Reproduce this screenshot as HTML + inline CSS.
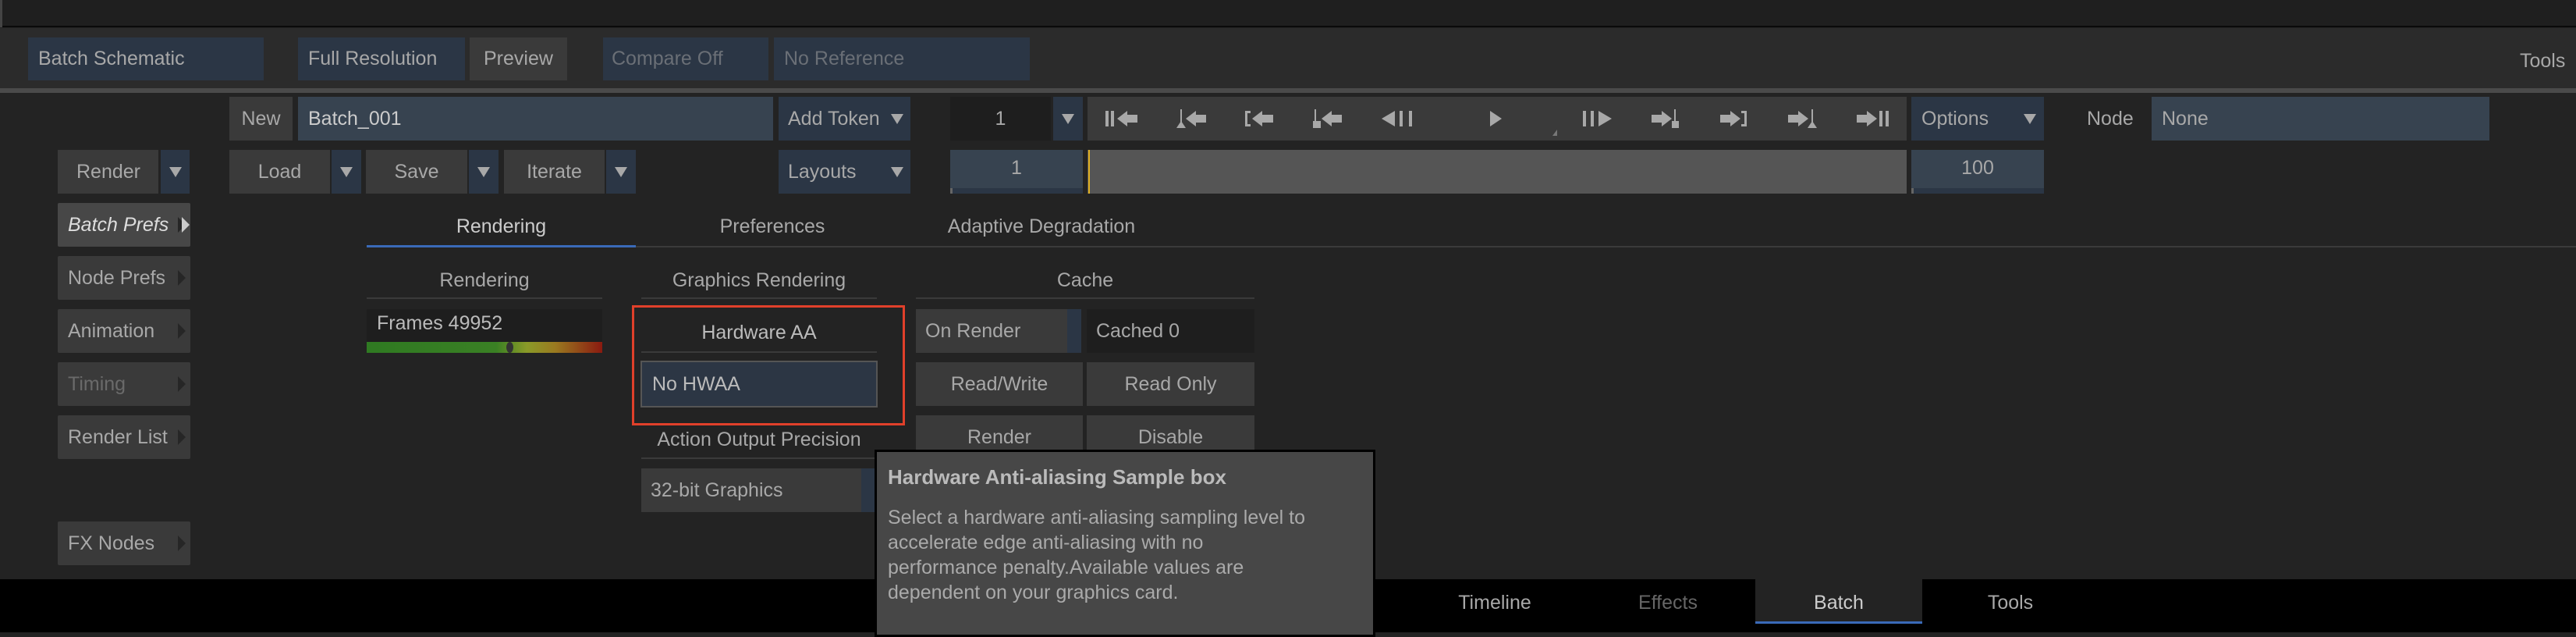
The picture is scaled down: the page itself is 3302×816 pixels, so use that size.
<!DOCTYPE html>
<html><head><meta charset="utf-8"><style>
*{margin:0;padding:0;box-sizing:border-box}
body{width:3302px;height:810px;background:#232323;position:relative;overflow:hidden;font-family:"Liberation Sans","DejaVu Sans",sans-serif;font-size:25px;color:#a8a8a8}
.a{position:absolute}
.b{position:absolute;display:flex;align-items:center;white-space:nowrap}
.blue{background:#2b3645}.fld{background:#374350}.gr{background:#3a3a3a}.dk{background:#1e1e1e}
.c{justify-content:center}
.dd{position:absolute;display:flex;align-items:center;justify-content:center;background:#2b3645}
.dd:after{content:"";border-left:8px solid transparent;border-right:8px solid transparent;border-top:13px solid #a8a8a8}
.side{position:absolute;left:74px;width:170px;height:56px;background:#3a3a3a;display:flex;align-items:center;padding-left:13px;border-radius:2px}
.side:after{content:"";position:absolute;right:6px;top:18px;border-top:10px solid transparent;border-bottom:10px solid transparent;border-left:10px solid #262626}
.hd{position:absolute;text-align:center;border-bottom:2px solid #3a3a3a;height:26px}
</style></head><body>
<div class="a" style="left:0;top:0;width:3302px;height:35px;background:#1f1f1f;border-bottom:2px solid #0a0a0a"></div>
<div class="a" style="left:0;top:0;width:3px;height:35px;background:#444"></div>
<div class="a" style="left:0;top:36px;width:3302px;height:77px;background:#2b2b2b"></div>
<div class="a" style="left:0;top:113px;width:3302px;height:6px;background:#4a4a4a"></div>

<div class="b blue" style="left:36px;top:48px;width:302px;height:55px;padding-left:13px">Batch Schematic</div>
<div class="b blue" style="left:382px;top:48px;width:214px;height:55px;padding-left:13px">Full Resolution</div>
<div class="b gr" style="left:602px;top:48px;width:125px;height:55px;padding-left:18px">Preview</div>
<div class="b blue" style="left:773px;top:48px;width:212px;height:55px;padding-left:11px;color:#6a6f76">Compare Off</div>
<div class="b blue" style="left:992px;top:48px;width:328px;height:55px;padding-left:13px;color:#6a6f76">No Reference</div>
<div class="b" style="left:3230px;top:60px;height:36px">Tools</div>

<div class="b gr c" style="left:294px;top:124px;width:81px;height:56px">New</div>
<div class="b fld" style="left:382px;top:124px;width:609px;height:56px;padding-left:13px;color:#ccc">Batch_001</div>
<div class="b blue" style="left:998px;top:124px;width:169px;height:56px;padding-left:12px">Add Token</div>
<div class="dd" style="left:1132px;top:124px;width:35px;height:56px;background:none"></div>
<div class="b dk c" style="left:1218px;top:124px;width:129px;height:56px">1</div>
<div class="dd" style="left:1350px;top:124px;width:38px;height:56px"></div>
<div class="a gr" style="left:1394px;top:124px;width:1050px;height:56px"></div>
<div class="b blue" style="left:2450px;top:124px;width:170px;height:56px;padding-left:13px">Options</div>
<div class="dd" style="left:2583px;top:124px;width:37px;height:56px;background:none"></div>
<div class="b" style="left:2675px;top:124px;height:56px">Node</div>
<div class="b fld" style="left:2758px;top:124px;width:433px;height:56px;padding-left:13px">None</div>

<div class="b gr" style="left:74px;top:192px;width:129px;height:56px;padding-left:24px">Render</div>
<div class="dd" style="left:206px;top:192px;width:37px;height:56px"></div>
<div class="b gr c" style="left:294px;top:192px;width:129px;height:56px">Load</div>
<div class="dd" style="left:425px;top:192px;width:38px;height:56px"></div>
<div class="b gr c" style="left:469px;top:192px;width:130px;height:56px">Save</div>
<div class="dd" style="left:601px;top:192px;width:38px;height:56px"></div>
<div class="b gr c" style="left:646px;top:192px;width:129px;height:56px">Iterate</div>
<div class="dd" style="left:777px;top:192px;width:38px;height:56px"></div>
<div class="b blue" style="left:998px;top:192px;width:169px;height:56px;padding-left:12px">Layouts</div>
<div class="dd" style="left:1132px;top:192px;width:35px;height:56px;background:none"></div>
<div class="b fld c" style="left:1218px;top:192px;width:170px;height:56px;padding-bottom:10px">1</div>
<div class="a" style="left:1218px;top:241px;width:170px;height:7px;background:#2b3645;border-left:3px solid #666"></div>
<div class="a" style="left:1394px;top:192px;width:1050px;height:56px;background:#555"></div>
<div class="a" style="left:1395px;top:192px;width:2px;height:56px;background:#e0b020"></div>
<div class="b fld c" style="left:2450px;top:192px;width:170px;height:56px;padding-bottom:10px">100</div>
<div class="a" style="left:2450px;top:241px;width:170px;height:7px;background:#2b3645;border-left:3px solid #666"></div>

<div class="side" style="top:260px;background:#474747;color:#ddd;font-style:italic">Batch Prefs</div>
<div class="a" style="left:233px;top:278px;border-top:10px solid transparent;border-bottom:10px solid transparent;border-left:10px solid #ccc"></div>
<div class="side" style="top:328px">Node Prefs</div>
<div class="side" style="top:396px">Animation</div>
<div class="side" style="top:464px;color:#6a6a6a">Timing</div>
<div class="side" style="top:532px">Render List</div>
<div class="side" style="top:668px">FX Nodes</div>

<div class="a" style="left:470px;top:315px;width:2832px;height:2px;background:#3a3a3a"></div>
<div class="a" style="left:470px;top:314px;width:345px;height:3px;background:#3a6ab8"></div>
<div class="b c" style="left:470px;top:272px;width:345px;height:36px;color:#ccc">Rendering</div>
<div class="b c" style="left:815px;top:272px;width:350px;height:36px">Preferences</div>
<div class="b c" style="left:1165px;top:272px;width:340px;height:36px">Adaptive Degradation</div>

<div class="hd" style="left:470px;top:345px;width:302px;height:38px">Rendering</div>
<div class="hd" style="left:822px;top:345px;width:302px;height:38px">Graphics Rendering</div>
<div class="hd" style="left:1174px;top:345px;width:434px;height:38px">Cache</div>

<div class="b dk" style="left:470px;top:396px;width:302px;height:42px;padding-left:13px;align-items:flex-start;padding-top:4px;color:#bbb">Frames 49952</div>
<div class="a" style="left:470px;top:438px;width:302px;height:14px;background:linear-gradient(90deg,#2f7a22 0%,#3a8024 55%,#8a9a28 68%,#9a7a20 80%,#8a1a10 100%)"></div>
<div class="a" style="left:649px;top:438px;width:9px;height:14px;border-radius:50%;background:#333"></div>

<div class="a" style="left:810px;top:391px;width:350px;height:154px;border:3px solid #e0402a"></div>
<div class="b c" style="left:822px;top:408px;width:302px;height:36px;color:#bbb">Hardware AA</div>
<div class="a" style="left:822px;top:450px;width:302px;height:2px;background:#3a3a3a"></div>
<div class="b" style="left:821px;top:462px;width:304px;height:60px;background:#2c3644;border:2px solid #555;padding-left:13px;color:#bbb">No HWAA</div>
<div class="b c" style="left:822px;top:545px;width:302px;height:36px">Action Output Precision</div>
<div class="a" style="left:822px;top:586px;width:302px;height:2px;background:#3a3a3a"></div>
<div class="b gr" style="left:822px;top:600px;width:282px;height:56px;padding-left:12px">32-bit Graphics</div>
<div class="a blue" style="left:1104px;top:600px;width:20px;height:56px"></div>

<div class="b gr" style="left:1174px;top:396px;width:194px;height:56px;padding-left:12px">On Render</div>
<div class="a blue" style="left:1368px;top:396px;width:18px;height:56px"></div>
<div class="b dk" style="left:1393px;top:396px;width:215px;height:56px;padding-left:12px">Cached 0</div>
<div class="b gr c" style="left:1174px;top:464px;width:214px;height:56px">Read/Write</div>
<div class="b gr c" style="left:1393px;top:464px;width:215px;height:56px">Read Only</div>
<div class="b gr c" style="left:1174px;top:532px;width:214px;height:56px">Render</div>
<div class="b gr c" style="left:1393px;top:532px;width:215px;height:56px">Disable</div>

<div class="a" style="left:0;top:742px;width:3302px;height:68px;background:#000"></div>
<div class="a" style="left:2250px;top:742px;width:214px;height:55px;background:#232323"></div>
<div class="a" style="left:2250px;top:796px;width:214px;height:3px;background:#3a6ab8"></div>
<div class="b c" style="left:1816px;top:752px;width:200px;height:40px">Timeline</div>
<div class="b c" style="left:2038px;top:752px;width:200px;height:40px;color:#666">Effects</div>
<div class="b c" style="left:2257px;top:752px;width:200px;height:40px;color:#ccc">Batch</div>
<div class="b c" style="left:2477px;top:752px;width:200px;height:40px">Tools</div>

<div class="a" style="left:1121px;top:576px;width:642px;height:240px;background:#474747;border:3px solid #000;padding:16px 14px;color:#aaa;font-size:25px;line-height:32px;white-space:nowrap">
<div style="font-weight:bold;font-size:26px;color:#bbb">Hardware Anti-aliasing Sample box</div>
<div style="margin-top:20px">Select a hardware anti-aliasing sampling level to<br>accelerate edge anti-aliasing with no<br>performance penalty.Available values are<br>dependent on your graphics card.</div>
</div>

<svg class="a" style="left:0;top:0" width="3302" height="810" fill="#a8a8a8">
<rect x="1417" y="142" width="4" height="20"/><rect x="1424" y="142" width="4" height="20"/>
<polygon points="1432,152 1445,142 1445,147 1458,147 1458,157 1445,157 1445,162"/>
<rect x="1513" y="140" width="2" height="18"/><polygon points="1508,164 1514,155 1520,164"/>
<polygon points="1520,152 1533,142 1533,147 1546,147 1546,157 1533,157 1533,162"/>
<rect x="1596" y="142" width="3" height="20"/><rect x="1596" y="142" width="7" height="3"/><rect x="1596" y="159" width="7" height="3"/>
<polygon points="1605,152 1618,142 1618,147 1632,147 1632,157 1618,157 1618,162"/>
<rect x="1685" y="140" width="2" height="16"/><rect x="1683" y="155" width="10" height="9"/>
<polygon points="1694,152 1707,142 1707,147 1720,147 1720,157 1707,157 1707,162"/>
<polygon points="1771,152 1788,142 1788,162"/><rect x="1794" y="142" width="4" height="20"/><rect x="1806" y="142" width="4" height="20"/>
<polygon points="1910,142 1925,152 1910,162"/>
<polygon points="1990,174 1996,166 1996,174" fill="#777"/>
<rect x="2029" y="142" width="4" height="20"/><rect x="2039" y="142" width="4" height="20"/><polygon points="2049,142 2066,152 2049,162"/>
<polygon points="2117,147 2130,147 2130,142 2143,152 2130,162 2130,157 2117,157"/><rect x="2146" y="140" width="2" height="16"/><rect x="2143" y="155" width="9" height="9"/>
<polygon points="2205,147 2218,147 2218,142 2231,152 2218,162 2218,157 2205,157"/><rect x="2236" y="142" width="3" height="20"/><rect x="2232" y="142" width="7" height="3"/><rect x="2232" y="159" width="7" height="3"/>
<polygon points="2292,147 2305,147 2305,142 2318,152 2305,162 2305,157 2292,157"/><rect x="2322" y="140" width="2" height="18"/><polygon points="2317,164 2323,155 2329,164"/>
<polygon points="2380,147 2393,147 2393,142 2406,152 2393,162 2393,157 2380,157"/><rect x="2409" y="142" width="4" height="20"/><rect x="2417" y="142" width="4" height="20"/>
</svg>
</body></html>
